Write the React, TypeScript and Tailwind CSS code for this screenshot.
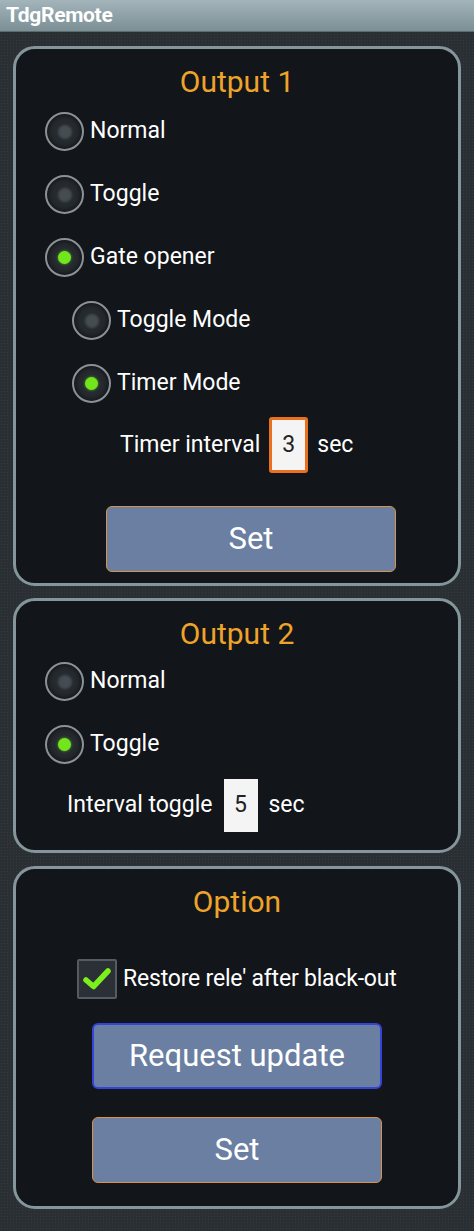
import React from "react";

const Radio: React.FC<{ label: string; checked?: boolean }> = ({ label, checked }) => (
  <div className="flex items-center h-[63px]">
    <div className="size-[39px] rounded-full border-2 border-[#8a9296] bg-[#262b30] flex items-center justify-center shadow-[inset_0_0_6px_rgba(0,0,0,0.8)]">
      {checked ? (
        <div className="size-[13px] rounded-full bg-[#72e61c] shadow-[0_0_3px_rgba(114,230,28,0.7)]" />
      ) : (
        <div className="size-[14px] rounded-full bg-[#454c52] blur-[1px]" />
      )}
    </div>
    <span className="ml-[6px] text-[23px] text-white">{label}</span>
  </div>
);

const Panel: React.FC<{ title: string; children: React.ReactNode }> = ({ title, children }) => (
  <section className="mx-[13px] rounded-[22px] border-[3px] border-[#84959b] bg-[#12151a] px-[29px]">
    <h2 className="pt-[14px] text-center text-[30px] leading-[38px] text-[#eea32a]">{title}</h2>
    {children}
  </section>
);

const Button: React.FC<{ text: string; blue?: boolean; className?: string }> = ({ text, blue, className }) => (
  <button
    className={
      (blue
        ? "w-[290px] h-[66px] block rounded-[6px] border-2 border-[#3444d8] bg-[#6a7fa2] text-[31px] text-white "
        : "w-[290px] h-[66px] block rounded-[6px] border-[1.5px] border-[#d8924a] bg-[#6a7fa2] text-[31px] text-white ") +
      (className ?? "mx-auto")
    }
  >
    {text}
  </button>
);

export default function App() {
  return (
    <div className="w-[474px] h-[1231px] bg-[#2a2f33] font-['Roboto',sans-serif] bg-[radial-gradient(rgba(255,255,255,0.05)_1px,transparent_1px)] bg-[length:3px_3px]">
      <header className="h-[32px] bg-gradient-to-b from-[#a3b5ba] to-[#7b8f95] px-[6px] flex items-center border-b border-[#5c6b70]">
        <span className="text-[21px] font-bold text-white tracking-[-0.3px]">TdgRemote</span>
      </header>

      <div className="pt-[14px] flex flex-col">
        <Panel title="Output 1">
          <div className="-mt-[1px]">
            <Radio label="Normal" />
            <Radio label="Toggle" />
            <Radio label="Gate opener" checked />
            <div className="pl-[27px]">
              <Radio label="Toggle Mode" />
              <Radio label="Timer Mode" checked />
            </div>
          </div>
          <div className="flex items-center pl-[75px] mt-[2px] h-[56px]">
            <span className="text-[23px] text-white">Timer interval</span>
            <div className="ml-[9px] w-[39px] h-[56px] rounded-[3px] border-[3px] border-[#e8701e] bg-[#f4f4f4] flex items-center justify-center text-[23px] text-[#222]">
              3
            </div>
            <span className="ml-[9px] text-[23px] text-white">sec</span>
          </div>
          <div className="pt-[33px] pb-[11px]">
            <Button text="Set" className="ml-[61px]" />
          </div>
        </Panel>

        <div className="mt-[12px]">
          <Panel title="Output 2">
            <div className="-mt-[3px]">
              <Radio label="Normal" />
              <Radio label="Toggle" checked />
            </div>
            <div className="flex items-center pl-[22px] mt-[3px] h-[53px] mb-[18px]">
              <span className="text-[23px] text-white">Interval toggle</span>
              <div className="ml-[11px] w-[34px] h-[53px] bg-[#f4f4f4] flex items-center justify-center text-[23px] text-[#222]">
                5
              </div>
              <span className="ml-[11px] text-[23px] text-white">sec</span>
            </div>
          </Panel>
        </div>

        <div className="mt-[13px]">
          <Panel title="Option">
            <div className="mt-[38px] flex items-center pl-[32px]">
              <div className="size-[40px] rounded-[2px] border-2 border-[#545b61] bg-[#2a3036] flex items-center justify-center">
                <svg width="30" height="26" viewBox="0 0 30 26">
                  <path d="M4 14 L11.5 20.5 L26 5" fill="none" stroke="#7cf01c" strokeWidth="5.5" strokeLinecap="round" strokeLinejoin="round" />
                </svg>
              </div>
              <span className="ml-[6px] text-[23px] text-white tracking-[-0.2px]">Restore rele' after black-out</span>
            </div>
            <div className="mt-[24px]">
              <Button text="Request update" blue />
            </div>
            <div className="mt-[28px] pb-[23px]">
              <Button text="Set" />
            </div>
          </Panel>
        </div>
      </div>
    </div>
  );
}
